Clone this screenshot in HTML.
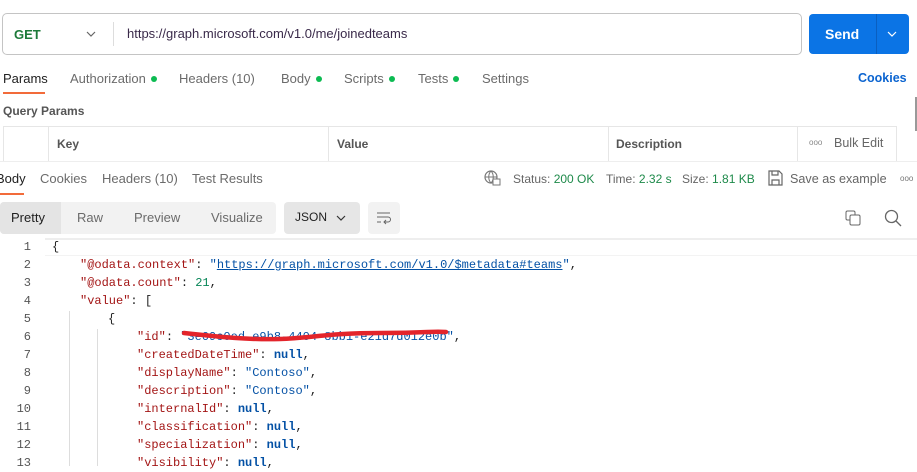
<!DOCTYPE html>
<html><head><meta charset="utf-8"><style>
*{box-sizing:border-box;margin:0;padding:0}
body{width:917px;height:465px;overflow:hidden;background:#fff;font-family:"Liberation Sans",Arial,sans-serif;font-size:13px;color:#212121;position:relative}
.a{position:absolute;white-space:nowrap}
.g{color:#6b6b6b}
.dot{display:inline-block;width:6px;height:6px;border-radius:50%;background:#0cbb52;margin-left:5px;vertical-align:1px}
.code{font-family:"Liberation Mono","DejaVu Sans Mono",monospace;font-size:12px;line-height:18px}
.k{color:#a31515}.s{color:#0451a5}.n{color:#098658}.nl{color:#0451a5;font-weight:bold}
.ln{position:absolute;left:0;width:31px;text-align:right;color:#555;font-family:"Liberation Mono",monospace;font-size:12px}
</style></head><body>
<div class="a" style="left:2px;top:13px;width:800px;height:42px;border:1px solid #c4c4c4;border-radius:5px"></div>
<div class="a" style="left:14px;top:27px;color:#1d7a3a;font-weight:bold;font-size:13px">GET</div>
<svg class="a" style="left:86px;top:30px" width="10" height="8"><path d="M1 2l4 4 4-4" stroke="#666" fill="none" stroke-width="1.2"/></svg>
<div class="a" style="left:113px;top:22px;width:1px;height:24px;background:#ddd"></div>
<div class="a" style="left:127px;top:26px;color:#3a2a4a;font-size:13px">https://graph.microsoft.com/v1.0/me/joinedteams</div>
<div class="a" style="left:809px;top:14px;width:100px;height:40px;background:#0b74e5;border-radius:4px"></div>
<div class="a" style="left:876px;top:14px;width:1px;height:40px;background:#0a5fc0"></div>
<div class="a" style="left:825px;top:26px;color:#fff;font-weight:bold;font-size:14px">Send</div>
<svg class="a" style="left:887px;top:30px" width="10" height="8"><path d="M1 2l4 4 4-4" stroke="#fff" fill="none" stroke-width="1.2"/></svg>
<div class="a" style="left:3px;top:71px;color:#212121">Params</div>
<div class="a" style="left:3px;top:92px;width:42px;height:2px;background:#f26b3a"></div>
<div class="a g" style="left:70px;top:71px">Authorization<span class="dot"></span></div>
<div class="a g" style="left:179px;top:71px">Headers (10)</div>
<div class="a g" style="left:281px;top:71px">Body<span class="dot"></span></div>
<div class="a g" style="left:344px;top:71px">Scripts<span class="dot"></span></div>
<div class="a g" style="left:418px;top:71px">Tests<span class="dot"></span></div>
<div class="a g" style="left:482px;top:71px">Settings</div>
<div class="a" style="left:858px;top:71px;color:#0b64d0;font-weight:bold;font-size:12.5px">Cookies</div>
<div class="a" style="left:3px;top:104px;color:#555;font-weight:bold;font-size:12px">Query Params</div>
<div class="a" style="left:3px;top:126px;width:894px;height:36px;border:1px solid #e6e6e6;border-bottom:none"></div>
<div class="a" style="left:48px;top:126px;width:1px;height:36px;background:#e6e6e6"></div>
<div class="a" style="left:328px;top:126px;width:1px;height:36px;background:#e6e6e6"></div>
<div class="a" style="left:608px;top:126px;width:1px;height:36px;background:#e6e6e6"></div>
<div class="a" style="left:797px;top:126px;width:1px;height:36px;background:#e6e6e6"></div>
<div class="a" style="left:57px;top:137px;color:#555;font-weight:bold;font-size:12px">Key</div>
<div class="a" style="left:337px;top:137px;color:#555;font-weight:bold;font-size:12px">Value</div>
<div class="a" style="left:616px;top:137px;color:#555;font-weight:bold;font-size:12px">Description</div>
<div class="a" style="left:809px;top:138px;color:#888;font-size:8px">ooo</div>
<div class="a" style="left:834px;top:136px;color:#666;font-size:12.5px">Bulk Edit</div>
<div class="a" style="left:915px;top:97px;width:2px;height:34px;background:#999"></div>
<div class="a" style="left:0;top:161px;width:917px;height:304px;background:#fff;border-top:1px solid #eee"></div>
<div class="a" style="left:-4px;top:171px;color:#212121">Body</div>
<div class="a" style="left:0;top:193px;width:24px;height:2px;background:#f26b3a"></div>
<div class="a g" style="left:40px;top:171px">Cookies</div>
<div class="a g" style="left:102px;top:171px">Headers (10)</div>
<div class="a g" style="left:192px;top:171px">Test Results</div>
<svg class="a" style="left:484px;top:170px" width="18" height="16"><circle cx="7" cy="7" r="6" stroke="#777" fill="none" stroke-width="1.2"/><path d="M1 7h12M7 1c-3 3-3 9 0 12M7 1c3 3 3 9 0 12" stroke="#777" fill="none"/><rect x="9" y="9" width="7" height="6" fill="#fff" stroke="#777"/></svg>
<div class="a" style="left:513px;top:172px;font-size:12px;color:#666">Status: <span style="color:#1e8a4a">200 OK</span></div>
<div class="a" style="left:606px;top:172px;font-size:12px;color:#666">Time: <span style="color:#1e8a4a">2.32 s</span></div>
<div class="a" style="left:682px;top:172px;font-size:12px;color:#666">Size: <span style="color:#1e8a4a">1.81 KB</span></div>
<svg class="a" style="left:768px;top:170px" width="15" height="16"><path d="M1 1h10l3 3v11H1z M4 1v4h6V1 M4 15v-5h7v5" stroke="#666" fill="none" stroke-width="1.2"/></svg>
<div class="a" style="left:790px;top:172px;color:#666;font-size:12.6px">Save as example</div>
<div class="a" style="left:900px;top:174px;color:#777;font-size:8px">ooo</div>
<div class="a" style="left:0;top:202px;width:276px;height:32px;background:#f2f2f2;border-radius:4px"></div>
<div class="a" style="left:0;top:202px;width:61px;height:32px;background:#e4e4e4;border-radius:4px 0 0 4px"></div>
<div class="a" style="left:11px;top:210px;color:#212121">Pretty</div>
<div class="a g" style="left:77px;top:210px">Raw</div>
<div class="a g" style="left:134px;top:210px">Preview</div>
<div class="a g" style="left:211px;top:210px">Visualize</div>
<div class="a" style="left:284px;top:202px;width:76px;height:32px;background:#e6e6e6;border-radius:4px"></div>
<div class="a" style="left:295px;top:210px;font-size:12px;color:#212121">JSON</div>
<svg class="a" style="left:336px;top:214px" width="10" height="8"><path d="M1 2l4 4 4-4" stroke="#333" fill="none" stroke-width="1.2"/></svg>
<div class="a" style="left:368px;top:202px;width:32px;height:32px;background:#f2f2f2;border-radius:4px"></div>
<svg class="a" style="left:376px;top:211px" width="16" height="14"><path d="M1 2h13M1 6h11a2.5 2.5 0 010 5H8M10 9l-2 2 2 2M1 11h4" stroke="#666" fill="none"/></svg>
<svg class="a" style="left:845px;top:210px" width="16" height="16"><rect x="1" y="1" width="9" height="9" rx="1.5" stroke="#666" fill="none"/><rect x="5" y="5" width="10" height="10" rx="1.5" stroke="#666" fill="#fff"/></svg>
<svg class="a" style="left:884px;top:209px" width="18" height="18"><circle cx="7.5" cy="7.5" r="6" stroke="#666" fill="none" stroke-width="1.3"/><path d="M12 12l5 5" stroke="#666" stroke-width="1.3"/></svg>
<div class="a" style="left:45px;top:238px;width:872px;height:18px;border-top:2px solid #eee;border-bottom:1px solid #f3f3f3"></div>
<div class="a" style="left:69px;top:311px;width:1px;height:155px;background:#ddd"></div>
<div class="a" style="left:97px;top:329px;width:1px;height:137px;background:#ddd"></div>
<div class="a code" style="left:0;top:238px;width:917px">
<div style="position:relative;height:18px"><span class="ln">1</span><span style="position:absolute;left:52px">{</span></div>
<div style="position:relative;height:18px"><span class="ln">2</span><span style="position:absolute;left:80px"><span class="k">"@odata.context"</span>: <span class="s">"<u>https://graph.microsoft.com/v1.0/$metadata#teams</u>"</span>,</span></div>
<div style="position:relative;height:18px"><span class="ln">3</span><span style="position:absolute;left:80px"><span class="k">"@odata.count"</span>: <span class="n">21</span>,</span></div>
<div style="position:relative;height:18px"><span class="ln">4</span><span style="position:absolute;left:80px"><span class="k">"value"</span>: [</span></div>
<div style="position:relative;height:18px"><span class="ln">5</span><span style="position:absolute;left:108px">{</span></div>
<div style="position:relative;height:18px"><span class="ln">6</span><span style="position:absolute;left:137px"><span class="k">"id"</span>: <span class="s">"3e09c0ed-e9b8-4404-8bb1-e21d7d012e0b"</span>,</span>
<svg style="position:absolute;left:180px;top:0" width="270" height="16"><path d="M4 5C40 9 70 12 100 11S150 5 200 5S250 3 266 4" stroke="#e3242b" stroke-width="4.5" fill="none" stroke-linecap="round"/></svg></div>
<div style="position:relative;height:18px"><span class="ln">7</span><span style="position:absolute;left:137px"><span class="k">"createdDateTime"</span>: <span class="nl">null</span>,</span></div>
<div style="position:relative;height:18px"><span class="ln">8</span><span style="position:absolute;left:137px"><span class="k">"displayName"</span>: <span class="s">"Contoso"</span>,</span></div>
<div style="position:relative;height:18px"><span class="ln">9</span><span style="position:absolute;left:137px"><span class="k">"description"</span>: <span class="s">"Contoso"</span>,</span></div>
<div style="position:relative;height:18px"><span class="ln">10</span><span style="position:absolute;left:137px"><span class="k">"internalId"</span>: <span class="nl">null</span>,</span></div>
<div style="position:relative;height:18px"><span class="ln">11</span><span style="position:absolute;left:137px"><span class="k">"classification"</span>: <span class="nl">null</span>,</span></div>
<div style="position:relative;height:18px"><span class="ln">12</span><span style="position:absolute;left:137px"><span class="k">"specialization"</span>: <span class="nl">null</span>,</span></div>
<div style="position:relative;height:18px"><span class="ln">13</span><span style="position:absolute;left:137px"><span class="k">"visibility"</span>: <span class="nl">null</span>,</span></div>
</div>
</body></html>
